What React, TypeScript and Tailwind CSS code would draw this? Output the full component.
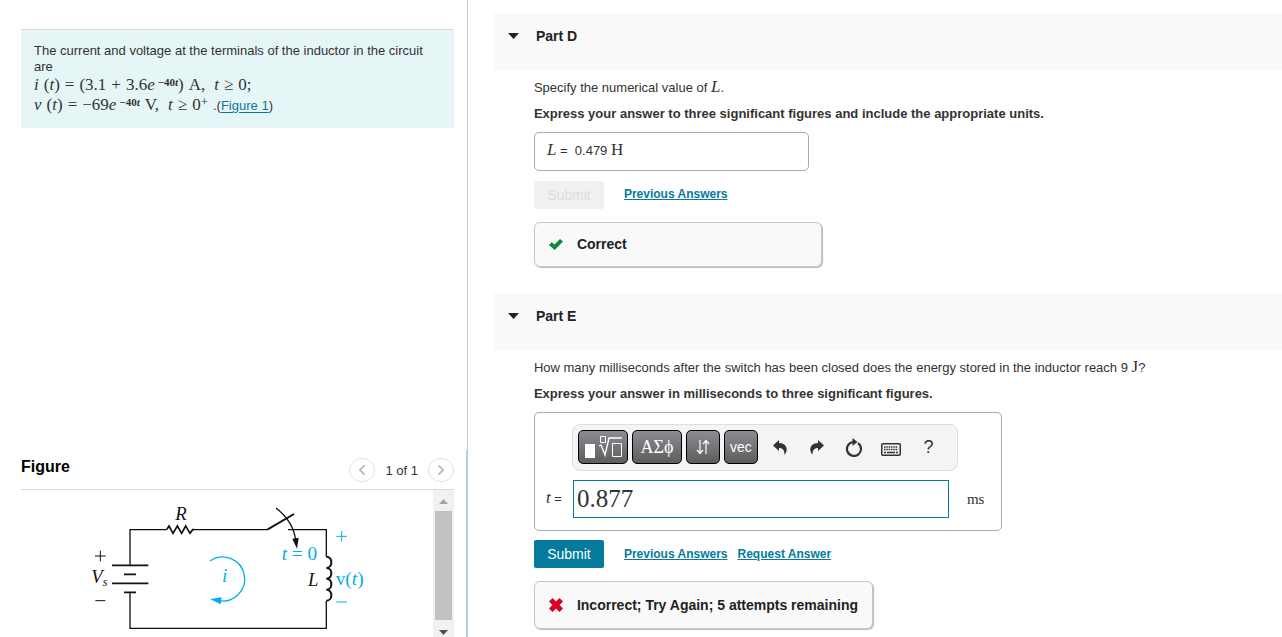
import type { ReactNode } from 'react';
import { FaChevronLeft, FaChevronRight } from 'react-icons/fa';

const serif = "font-['Liberation_Serif','Times_New_Roman',serif]";

const Var = ({ children }: { children: ReactNode }) => (
  <span className={`${serif} text-[17px] leading-none italic`}>{children}</span>
);

const Unit = ({ children }: { children: ReactNode }) => (
  <span className={`${serif} text-[17px] leading-none`}>{children}</span>
);

const TextLink = ({ children }: { children: ReactNode }) => (
  <a href="#" className="text-[12px] leading-4 font-bold text-[#047a9c] underline underline-offset-1">{children}</a>
);

const Exponent = () => (
  <span className="ml-[3px] align-[4px] text-[11px] leading-none font-bold">−40<i>t</i></span>
);

const Circuit = () => (
  <svg viewBox="0 0 900 441" className="w-[300px] h-[147px] shrink-0" fill="none" stroke="#111" strokeWidth="4" fontFamily="'Liberation Serif', serif">
    <path d="M150 224V119H260M342 119H562" />
    <path d="M260 119l7-11 12 22 13-22 13 22 12-22 13 22 8-11h4" strokeWidth="5" />
    <path d="M562 119L642 72" strokeWidth="6" />
    <path d="M624 119H739V200" />
    <path d="M739 200c20 0 20 34 0 34c20 0 20 32 0 32c20 0 20 33 0 33c20 0 20 33 0 33" strokeWidth="6" />
    <path d="M739 332V415H150V308" />
    <path d="M96 226H205M132 253H168M96 280H205M132 307H168" strokeWidth="5" />
    <path d="M588 54C624 82 642 112 647 150" strokeWidth="4" />
    <path d="M637 146l19-3-5 33z" fill="#111" stroke="none" />
    <path d="M45 198H77M61 182V214M46 332H76" strokeWidth="3" />
    <g stroke="#00aeef">
      <path d="M390 213A66 66 0 1 1 412 331" strokeWidth="4" />
      <path d="M390 327l35-5-3 21z" fill="#00aeef" stroke="none" />
      <path d="M769 139H801M785 123V155M769 336H801" strokeWidth="3" />
    </g>
    <g fill="#111" stroke="none" fontSize="56" fontStyle="italic">
      <text x="286" y="91">R</text>
      <text x="34" y="278">V</text>
      <text x="68" y="289" fontSize="36">s</text>
      <text x="684" y="288">L</text>
    </g>
    <g fill="#00aeef" stroke="none" fontSize="58">
      <text x="605" y="211"><tspan fontStyle="italic">t</tspan> = 0</text>
      <text x="426" y="277" fontStyle="italic">i</text>
      <text x="767" y="284">v(<tspan fontStyle="italic">t</tspan>)</text>
    </g>
  </svg>
);

const Problem = () => (
  <div className="border-t border-[#dadada] bg-[#e6f6f7] pl-[13px] pr-6 pt-[13px] pb-3">
    <p className="leading-4">The current and voltage at the terminals of the inductor in the circuit are</p>
    <div className={`${serif} text-[17px] leading-5 whitespace-nowrap`}>
      <p className="flex items-baseline gap-[5px] h-5">
        <i>i</i>
        <span>(<i>t</i>)</span>
        <span>=</span>
        <span>(3.1</span>
        <span>+</span>
        <span>3.6<i>e</i><Exponent />)</span>
        <span>A,</span>
        <i className="ml-1">t</i>
        <span>≥</span>
        <span>0;</span>
      </p>
      <p className="flex items-baseline gap-[5px] h-[21px]">
        <i>v</i>
        <span>(<i>t</i>)</span>
        <span>=</span>
        <span>−69<i>e</i><Exponent /></span>
        <span>V,</span>
        <i className="ml-1">t</i>
        <span>≥</span>
        <span>0<span className="align-[4px] text-[13px] leading-none">+</span></span>
        <span className="font-['Liberation_Sans',Arial,sans-serif] text-[13px]">
          .(<a href="#figure" className="text-[#047a9c] underline underline-offset-2">Figure 1</a>)
        </span>
      </p>
    </div>
  </div>
);

const Figure = () => (
  <section id="figure" className="flex">
    <div className="flex-1 pl-[21px] pr-3">
      <div className="flex h-10 items-center border-b border-[#dadada]">
        <h2 className="flex-1 text-[16px] font-bold text-black -mt-[6px]">Figure</h2>
        <button aria-label="Previous figure" className="grid h-6 w-[26px] place-items-center rounded-full border border-[#e2e2e2] text-[#bbb]">
          <FaChevronLeft size={12} />
        </button>
        <span className="mx-[10px] pt-[2px] text-[13px]">1 of 1</span>
        <button aria-label="Next figure" className="grid h-6 w-[26px] place-items-center rounded-full border border-[#e2e2e2] text-[#bbb]">
          <FaChevronRight size={12} />
        </button>
      </div>
      <div className="flex h-[147px] justify-between">
        <div className="pl-[59px]"><Circuit /></div>
        <div className="flex w-[21px] flex-col items-center justify-between bg-[#f1f1f1] pt-[9px]">
          <svg width="9" height="5" viewBox="0 0 9 5"><path d="M0 5l4.500-5L9 5z" fill="#a3a3a3" /></svg>
          <div className="my-[7px] w-[17px] flex-1 bg-[#c1c1c1]" />
          <svg width="9" height="5" viewBox="0 0 9 5" className="mt-[3px] mb-[2px]"><path d="M0 0l4.500 5L9 0z" fill="#505050" /></svg>
        </div>
      </div>
    </div>
    <div className="w-[2px] bg-[#b9cbdf]" />
  </section>
);

const Part = ({ title, children }: { title: string; children: ReactNode }) => (
  <section>
    <header className="ml-[26px] h-[57px] bg-[#f9f9f9] pt-3 pl-[14px]">
      <button className="flex items-center text-[14px] font-bold leading-[22px] text-[#222]">
        <svg width="11" height="6" viewBox="0 0 11 6"><path d="M0 0h11L5.500 6z" fill="#222" /></svg>
        <span className="ml-[17px]">{title}</span>
      </button>
    </header>
    <div className="pl-[66px] pt-2">{children}</div>
  </section>
);

const Feedback = ({ icon, wide, children }: { icon: ReactNode; wide?: boolean; children: ReactNode }) => (
  <div
    className={`mt-[13px] flex items-center gap-[14px] rounded-md border border-[#c6c6c6] bg-[#f9f9f9] pl-[14px] text-[14px] font-bold text-[#222] shadow-[1px_1px_1px_#bbb] ${
      wide ? 'h-12 w-[339px]' : 'h-[45px] w-[288px]'
    }`}
  >
    {icon}
    {children}
  </div>
);

const Instruction = ({ children }: { children: ReactNode }) => (
  <p className="mt-[6px] mb-2 font-bold leading-5">{children}</p>
);

const keyStyle =
  'grid h-[34px] place-items-center rounded-[5px] border border-black bg-linear-to-b from-[#8e8c93] to-[#5d5d5d] text-white';
const toolStyle = 'grid h-[34px] w-[37px] place-items-center text-[#333]';

const Toolbar = () => (
  <div className="ml-[26px] flex h-[47px] w-[386px] items-center gap-1 rounded-lg border border-[#dedede] bg-[#f4f4f4] px-[5px] pb-px">
    <button aria-label="Templates" className={`${keyStyle} w-[50px]`}>
      <svg width="38" height="24" viewBox="0 0 38 24" fill="none" stroke="#fff">
        <path d="M1 9h10v14H1z" fill="#fff" stroke="none" />
        <path d="M16.500 1.500h5v6h-5z" strokeWidth="1" />
        <path d="M15 11l2-1 4 10 4-17h13" strokeWidth="1.300" />
        <path d="M28.500 8.500h9v13h-9z" />
      </svg>
    </button>
    <button className={`${keyStyle} ${serif} w-[50px] text-[18px] leading-none`}>ΑΣϕ</button>
    <button aria-label="Arrows" className={`${keyStyle} w-[34px]`}>
      <svg width="14" height="16" viewBox="0 0 14 16" fill="none" stroke="#fff" strokeWidth="1.200">
        <path d="M4 1v13M1 11l3 3.500L7 11M10 15V2M7 5l3-3.500L13 5" />
      </svg>
    </button>
    <button className={`${keyStyle} w-[34px] text-[14px]`}>vec</button>
    <div className="flex">
      <button aria-label="Undo" className={toolStyle}>
        <svg width="14" height="15" viewBox="0 0 14 15"><path d="M0 5.500L6 0v3c5 0 8 3 7.700 7-.2 1.700-1 3.500-2.200 4.800C11.500 10.500 10 8 6 8v3z" fill="currentColor" /></svg>
      </button>
      <button aria-label="Redo" className={toolStyle}>
        <svg width="14" height="15" viewBox="0 0 14 15"><path d="M14 5.500L8 0v3C3 3 0 6 .3 10c.2 1.700 1 3.500 2.200 4.800C2.500 10.500 4 8 8 8v3z" fill="currentColor" /></svg>
      </button>
      <button aria-label="Reset" className={toolStyle}>
        <svg width="18" height="19" viewBox="0 0 18 19">
          <path d="M13 5.200A7 7 0 1 1 8 4" fill="none" stroke="currentColor" strokeWidth="2.200" />
          <path d="M7.500 0l5 4-5 4z" fill="currentColor" />
        </svg>
      </button>
      <button aria-label="Keyboard" className={toolStyle}>
        <svg width="20" height="13" viewBox="0 0 20 13" className="mt-1" fill="none" stroke="currentColor">
          <rect x=".75" y=".75" width="18.500" height="11.500" rx="1" strokeWidth="1.500" />
          <path d="M3 4h14M3 6.500h14" strokeWidth="1.500" strokeDasharray="1.500 .8" />
          <path d="M3 9.500h2M6 9.500h8M15 9.500h2" strokeWidth="1.500" />
        </svg>
      </button>
      <button aria-label="Help" className={`${toolStyle} text-[18px]`}>?</button>
    </div>
  </div>
);

const Check = () => (
  <svg width="14" height="11" viewBox="0 0 14 11"><path d="M0 6l2.800-2.700 2.700 2.200L11 0l3 2.500L5.700 11z" fill="#0a8a3c" /></svg>
);

const Cross = () => (
  <svg width="14" height="14" viewBox="0 0 14 14">
    <path d="M3.500 0L7 3.500 10.500 0 14 3.500 10.500 7 14 10.500 10.500 14 7 10.500 3.500 14 0 10.500 3.500 7 0 3.500z" fill="#db0020" />
  </svg>
);

const App = () => {
  return (
    <div className="flex h-screen overflow-hidden bg-white font-['Liberation_Sans',Arial,sans-serif] text-[13px] text-[#333]">
      <aside className="flex w-[36.5%] shrink-0 flex-col justify-between">
        <div className="flex flex-1 flex-col border-r border-[#b9cbdf] pt-[29px] pl-[21px] pr-[13px]">
          <Problem />
        </div>
        <Figure />
      </aside>

      <main className="flex-1 pt-[13px]">
        <Part title="Part D">
          <p className="leading-5 h-5">Specify the numerical value of <Var>L</Var>.</p>
          <Instruction>Express your answer to three significant figures and include the appropriate units.</Instruction>
          <div className="flex h-[39px] w-[275px] items-center rounded-[5px] border border-[#aaa] pl-3 pb-[2px]">
            <p><Var>L</Var> =&nbsp; 0.479 <Unit>H</Unit></p>
          </div>
          <div className="mt-[10px] flex">
            <button disabled className="h-7 w-[70px] rounded-xs bg-[#f1f1f1] text-[14px] text-[#dcdcdc]">Submit</button>
            <div className="ml-5 pt-[3px]"><TextLink>Previous Answers</TextLink></div>
          </div>
          <Feedback icon={<Check />}>Correct</Feedback>
        </Part>

        <div className="h-[26px]" />

        <Part title="Part E">
          <p className="leading-5 h-5">
            How many milliseconds after the switch has been closed does the energy stored in the inductor reach 9 <Unit>J</Unit>?
          </p>
          <Instruction>Express your answer in milliseconds to three significant figures.</Instruction>
          <div className="w-[468px] rounded-[5px] border border-[#aaa] pl-[11px] pt-[11px] pb-3">
            <Toolbar />
            <div className="mt-[9px] flex items-center">
              <label htmlFor="answer" className="w-[27px]"><Var>t</Var> =</label>
              <input
                id="answer"
                defaultValue="0.877"
                className={`${serif} h-[38px] w-[376px] border border-[#047a9c] px-[3px] text-[25px] leading-none text-[#333] outline-none`}
              />
              <span className={`${serif} ml-[18px] text-[15px]`}>ms</span>
            </div>
          </div>
          <div className="mt-[9px] flex">
            <button className="h-7 w-[70px] rounded-xs bg-[#047a9c] text-[14px] text-white">Submit</button>
            <div className="ml-5 flex gap-[10px] pt-[6px]">
              <TextLink>Previous Answers</TextLink>
              <TextLink>Request Answer</TextLink>
            </div>
          </div>
          <Feedback wide icon={<Cross />}>
            Incorrect; Try Again; 5 attempts remaining
          </Feedback>
        </Part>
      </main>
    </div>
  );
};

export default App;
